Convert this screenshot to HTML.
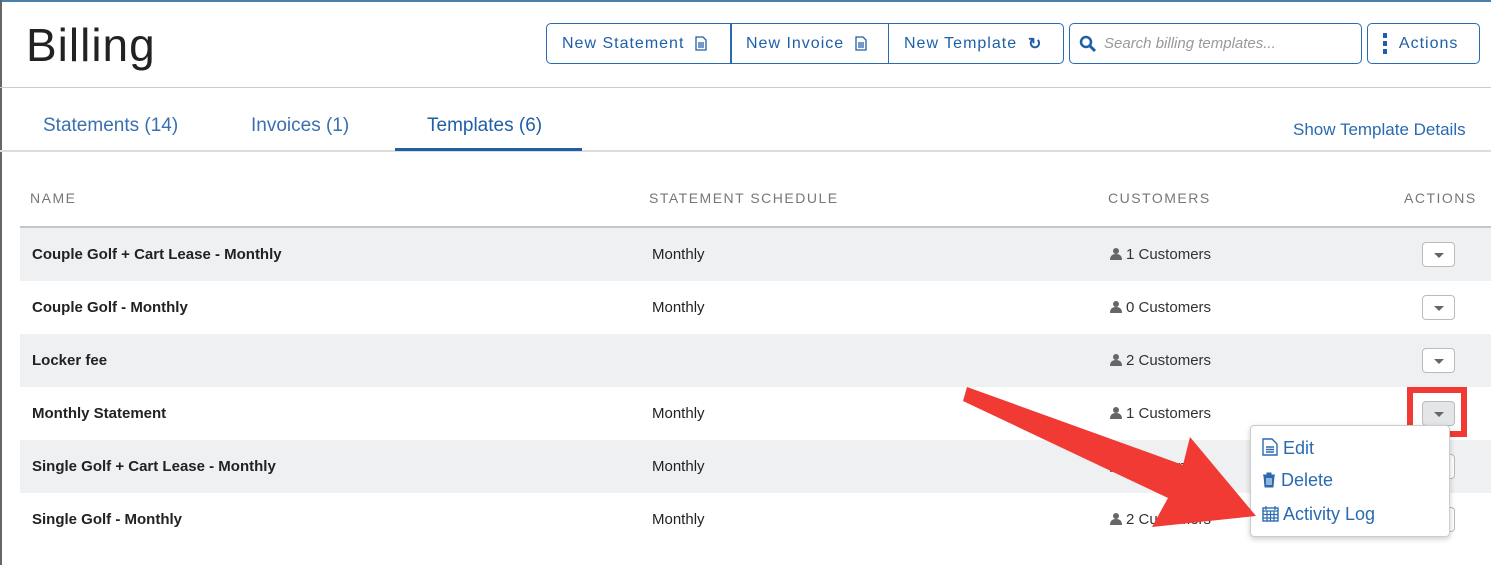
<!DOCTYPE html>
<html><head><style>
*{box-sizing:border-box;margin:0;padding:0}
body{width:1491px;height:565px;overflow:hidden;background:#fff;font-family:"Liberation Sans",sans-serif;position:relative}
.a{position:absolute}
h1{position:absolute;left:26px;top:18px;font-weight:300;font-size:46px;color:#222;letter-spacing:1px}
.btn{position:absolute;top:23px;height:41px;border:1px solid #2a6ab0;color:#1f5fa8;font-size:16px;letter-spacing:1px;display:flex;align-items:center;padding-left:15px}
.tab{position:absolute;top:115px;font-size:19px;color:#3a6fb0}
.th{position:absolute;top:190px;font-size:14px;color:#777;letter-spacing:1.5px}
.row{position:absolute;left:20px;width:1471px;height:53px;font-size:15px;color:#222}
.row span{position:absolute;top:18px}
.g{background:#eff0f2}
.dd{position:absolute;left:1402px;top:14px;width:33px;height:25px;border:1px solid #bbb;border-radius:4px;background:#fff}
.dd:after{content:"";position:absolute;left:11px;top:10px;border-left:5px solid transparent;border-right:5px solid transparent;border-top:5px solid #666}
.cu{left:1090px;color:#333}
.pi{display:inline-block;width:12px;height:12px;vertical-align:-1px;margin-right:4px}
.mi{position:absolute;left:1262px;font-size:18px;color:#2a6ab0}
</style></head><body>
<div class="a" style="left:0;top:0;width:1491px;height:2px;background:#4a7fa8"></div>
<div class="a" style="left:0;top:0;width:2px;height:565px;background:#666"></div>
<h1>Billing</h1>
<div class="btn" style="left:546px;width:186px;border-radius:5px 0 0 5px">New Statement &nbsp;<svg width="12" height="15" viewBox="0 0 12 15"><path d="M1 1h7l3 3v10H1z M3 7h6M3 9h6M3 11h6" fill="none" stroke="#1f5fa8" stroke-width="1.3"/></svg></div>
<div class="btn" style="left:730px;width:159px;border-left:1px solid #2a6ab0">New Invoice &nbsp;<svg width="12" height="15" viewBox="0 0 12 15"><path d="M1 1h7l3 3v10H1z M3 7h6M3 9h6M3 11h6" fill="none" stroke="#1f5fa8" stroke-width="1.3"/></svg></div>
<div class="btn" style="left:888px;width:176px;border-radius:0 5px 5px 0">New Template &nbsp;<span style="font-weight:bold;font-size:16px">&#x21BB;</span></div>
<div class="btn" style="left:1069px;width:293px;border-radius:5px;padding-left:9px;letter-spacing:0"><svg width="18" height="18" viewBox="0 0 18 18"><circle cx="7" cy="7" r="5" fill="none" stroke="#1f5fa8" stroke-width="2.5"/><path d="M11 11l5 5" stroke="#1f5fa8" stroke-width="3"/></svg><i style="color:#999;font-size:15px;margin-left:7px">Search billing templates...</i></div>
<div class="btn" style="left:1367px;width:113px;border-radius:5px;padding-left:14px"><svg width="6" height="24" viewBox="0 0 6 24"><rect x="1" y="1" width="4" height="5" fill="#1f5fa8"/><rect x="1" y="9" width="4" height="5" fill="#1f5fa8"/><rect x="1" y="17" width="4" height="5" fill="#1f5fa8"/></svg>&nbsp;&nbsp;Actions</div>
<div class="a" style="left:0;top:87px;width:1491px;height:1px;background:#ccc"></div>
<div class="tab" style="left:43px">Statements (14)</div>
<div class="tab" style="left:251px">Invoices (1)</div>
<div class="tab" style="left:427px;color:#1f5fa8">Templates (6)</div>
<div class="a" style="left:1293px;top:120px;font-size:17px;color:#2a6ab0">Show Template Details</div>
<div class="a" style="left:0;top:150px;width:1491px;height:2px;background:#ddd"></div>
<div class="a" style="left:395px;top:148px;width:187px;height:3px;background:#1f5fa8"></div>
<div class="th" style="left:30px">NAME</div>
<div class="th" style="left:649px">STATEMENT SCHEDULE</div>
<div class="th" style="left:1108px">CUSTOMERS</div>
<div class="th" style="left:1404px">ACTIONS</div>
<div class="a" style="left:20px;top:226px;width:1471px;height:2px;background:#c4c6ca"></div>
<div class="row g" style="top:228px"><span style="left:12px;font-weight:bold">Couple Golf + Cart Lease - Monthly</span><span style="left:632px">Monthly</span><span class="cu"><svg class="pi" viewBox="0 0 12 12"><circle cx="6" cy="3" r="3" fill="#666"/><path d="M0 12q0-6 6-6t6 6z" fill="#666"/></svg>1 Customers</span><div class="dd"></div></div>
<div class="row" style="top:281px"><span style="left:12px;font-weight:bold">Couple Golf - Monthly</span><span style="left:632px">Monthly</span><span class="cu"><svg class="pi" viewBox="0 0 12 12"><circle cx="6" cy="3" r="3" fill="#666"/><path d="M0 12q0-6 6-6t6 6z" fill="#666"/></svg>0 Customers</span><div class="dd"></div></div>
<div class="row g" style="top:334px"><span style="left:12px;font-weight:bold">Locker fee</span><span class="cu"><svg class="pi" viewBox="0 0 12 12"><circle cx="6" cy="3" r="3" fill="#666"/><path d="M0 12q0-6 6-6t6 6z" fill="#666"/></svg>2 Customers</span><div class="dd"></div></div>
<div class="row" style="top:387px"><span style="left:12px;font-weight:bold">Monthly Statement</span><span style="left:632px">Monthly</span><span class="cu"><svg class="pi" viewBox="0 0 12 12"><circle cx="6" cy="3" r="3" fill="#666"/><path d="M0 12q0-6 6-6t6 6z" fill="#666"/></svg>1 Customers</span><div class="dd" style="background:#e4e5e7"></div></div>
<div class="row g" style="top:440px"><span style="left:12px;font-weight:bold">Single Golf + Cart Lease - Monthly</span><span style="left:632px">Monthly</span><span class="cu"><svg class="pi" viewBox="0 0 12 12"><circle cx="6" cy="3" r="3" fill="#666"/><path d="M0 12q0-6 6-6t6 6z" fill="#666"/></svg>1 Customers</span><div class="dd"></div></div>
<div class="row" style="top:493px"><span style="left:12px;font-weight:bold">Single Golf - Monthly</span><span style="left:632px">Monthly</span><span class="cu"><svg class="pi" viewBox="0 0 12 12"><circle cx="6" cy="3" r="3" fill="#666"/><path d="M0 12q0-6 6-6t6 6z" fill="#666"/></svg>2 Customers</span><div class="dd"></div></div>
<div class="a" style="left:1407px;top:387px;width:60px;height:50px;border:6px solid #f03a33"></div>
<div class="a" style="left:1250px;top:425px;width:200px;height:112px;background:#fff;border:1px solid #ccc;border-radius:4px;box-shadow:0 2px 6px rgba(0,0,0,.2)"></div>
<div class="mi" style="top:438px"><svg width="16" height="18" viewBox="0 0 16 18" style="vertical-align:-2px"><path d="M1 1h9l5 5v11H1z M4 9h8M4 11.5h8M4 14h8" fill="none" stroke="#2a6ab0" stroke-width="1.4"/></svg> Edit</div>
<div class="mi" style="top:470px"><svg width="14" height="16" viewBox="0 0 14 16" style="vertical-align:-2px"><path d="M1 3h12M5 3V1h4v2M2 4h10l-1 11H3z" fill="#2a6ab0" stroke="#2a6ab0"/><path d="M5 6v7M7 6v7M9 6v7" stroke="#fff"/></svg> Delete</div>
<div class="mi" style="top:504px"><svg width="17" height="17" viewBox="0 0 17 17" style="vertical-align:-2px"><rect x="1" y="3" width="15" height="13" fill="none" stroke="#2a6ab0" stroke-width="1.4"/><path d="M1 6h15M1 9.5h15M1 13h15M5 6v10M8.5 6v10M12 6v10M4 1v4M13 1v4" stroke="#2a6ab0" stroke-width="1.2"/></svg> Activity Log</div>
<svg class="a" style="left:0;top:0" width="1491" height="565"><polygon points="967,387 1183,465 1190,437 1256,516 1152,527 1168,498 963,401" fill="#f03a33"/></svg>
</body></html>
